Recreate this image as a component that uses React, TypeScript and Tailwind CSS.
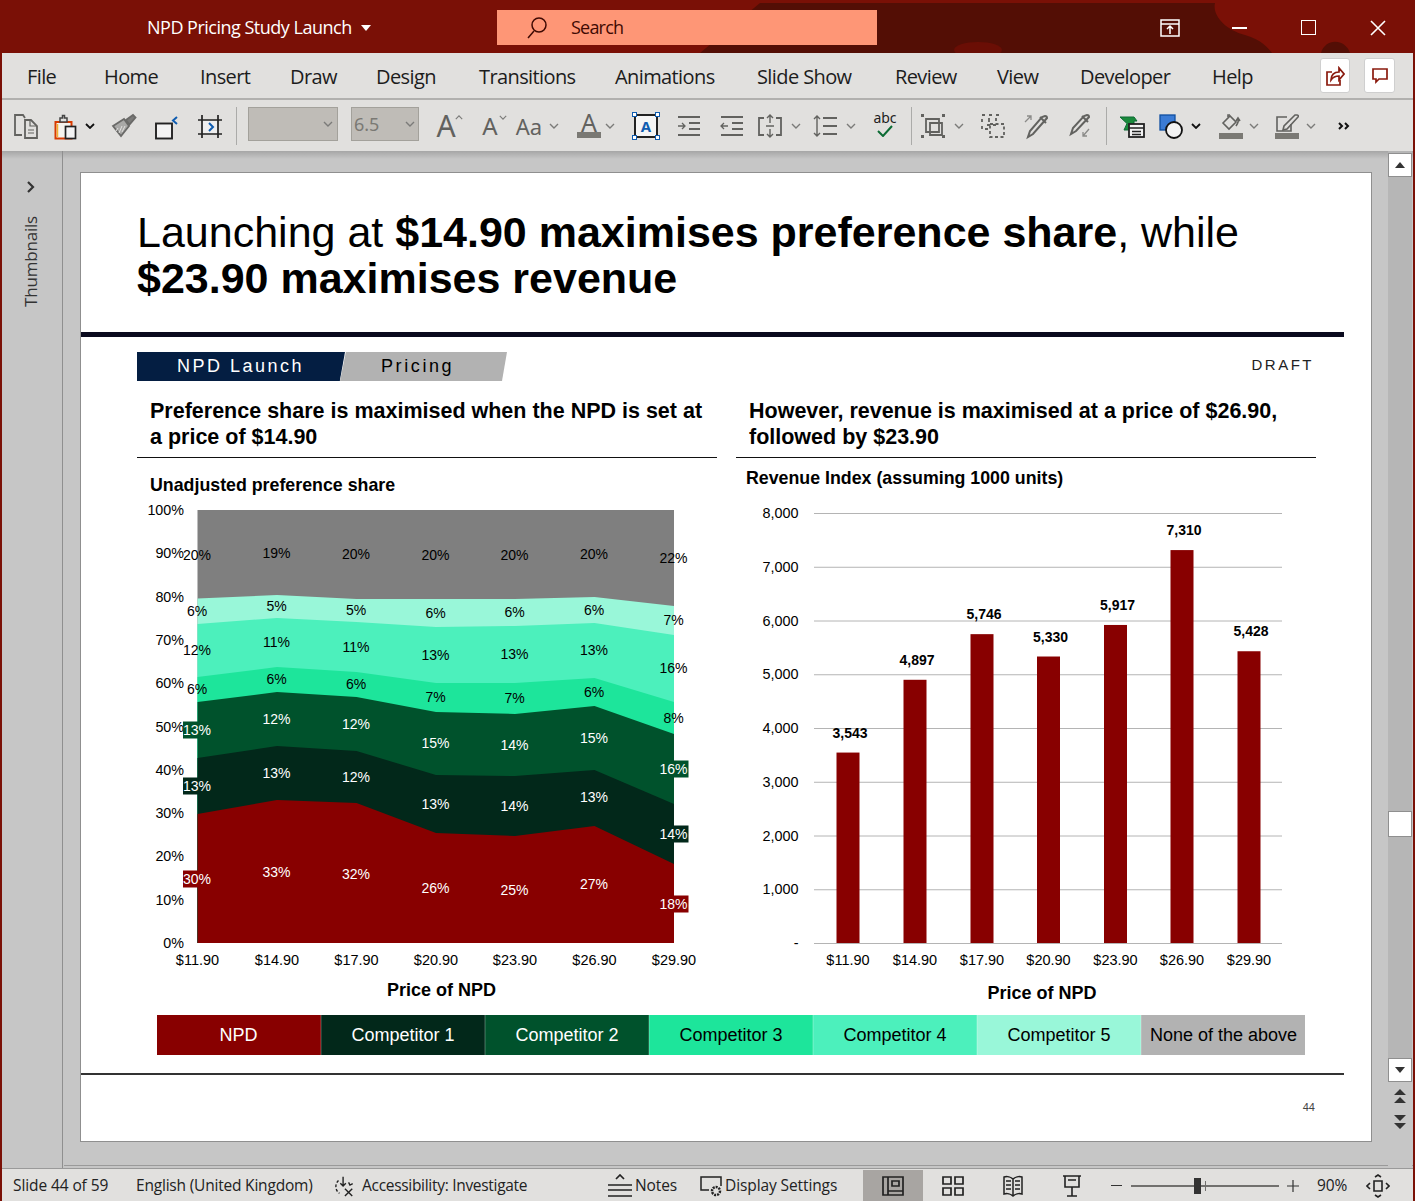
import type { ReactNode } from 'react';

const tabs = [
  ['File', 'w-[77px]'],
  ['Home', 'w-[96px]'],
  ['Insert', 'w-[90px]'],
  ['Draw', 'w-[86px]'],
  ['Design', 'w-[103px]'],
  ['Transitions', 'w-[136px]'],
  ['Animations', 'w-[142px]'],
  ['Slide Show', 'w-[138px]'],
  ['Review', 'w-[102px]'],
  ['View', 'w-[83px]'],
  ['Developer', 'w-[132px]'],
  ['Help', 'w-[60px]'],
];

const legend = [
  ['NPD', 'bg-[#880000] text-white'],
  ['Competitor 1', 'bg-[#02281a] text-white'],
  ['Competitor 2', 'bg-[#00522c] text-white'],
  ['Competitor 3', 'bg-[#1de59b] text-black'],
  ['Competitor 4', 'bg-[#4cf0bc] text-black'],
  ['Competitor 5', 'bg-[#99f7d9] text-black'],
  ['None of the above', 'bg-[#b2b2b2] text-black'],
];

const xs = [197.5, 277, 356.5, 436, 515, 594.5, 674];
const prices = ['$11.90', '$14.90', '$17.90', '$20.90', '$23.90', '$26.90', '$29.90'];
const bands = [
  { fill: '#7f7f7f', top: [510, 510, 510, 510, 510, 510, 510] },
  { fill: '#99f7d9', top: [598.5, 595, 599, 599, 599, 597, 606] },
  { fill: '#4cf0bc', top: [624, 618, 622, 627, 626, 623, 635] },
  { fill: '#1de59b', top: [677, 667, 672, 683, 683, 678, 702] },
  { fill: '#00522c', top: [702, 692, 697, 712, 714, 706, 734] },
  { fill: '#02281a', top: [758, 746, 751, 775, 776, 770, 804] },
  { fill: '#880000', top: [814, 800, 803, 833, 836, 826, 864] },
];

// value, y centre per column, top band to bottom band
const labels: [string, number][][] = [
  [['20%', 555], ['6%', 611], ['12%', 650], ['6%', 689], ['13%', 730], ['13%', 786], ['30%', 879]],
  [['19%', 553], ['5%', 606], ['11%', 642], ['6%', 679], ['12%', 719], ['13%', 773], ['33%', 872]],
  [['20%', 554], ['5%', 610], ['11%', 647], ['6%', 684], ['12%', 724], ['12%', 777], ['32%', 874]],
  [['20%', 555], ['6%', 613], ['13%', 655], ['7%', 697], ['15%', 743], ['13%', 804], ['26%', 888]],
  [['20%', 555], ['6%', 612], ['13%', 654], ['7%', 698], ['14%', 745], ['14%', 806], ['25%', 890]],
  [['20%', 554], ['6%', 610], ['13%', 650], ['6%', 692], ['15%', 738], ['13%', 797], ['27%', 884]],
  [['22%', 558], ['7%', 620], ['16%', 668], ['8%', 718], ['16%', 769], ['14%', 834], ['18%', 904]],
];

const AreaChart = () => (
  <svg viewBox="137 500 580 505" className="block h-[505px] w-[580px]">
    {bands.map((b) => (
      <polygon
        key={b.fill}
        fill={b.fill}
        points={`${b.top.map((y, i) => `${xs[i]},${y}`).join(' ')} 674,943 197.5,943`}
      />
    ))}
    {['100%', '90%', '80%', '70%', '60%', '50%', '40%', '30%', '20%', '10%', '0%'].map((t, i) => (
      <text key={t} x="184" y={510 + i * 43.3 + 5} textAnchor="end" fontSize="14.3" fill="#000">{t}</text>
    ))}
    {labels.map((col, c) =>
      col.map(([t, y], r) => {
        const edge = (c === 0 || c === 6) && r >= 4;
        return (
          <g key={`${c}-${r}`}>
            {edge && <rect x={xs[c] - 14.5} y={y - 8.5} width="29" height="17" fill={bands[r].fill} />}
            <text x={xs[c] - 0.5} y={y + 5} textAnchor="middle" fontSize="14" fill={r >= 4 ? '#fff' : '#000'}>{t}</text>
          </g>
        );
      }),
    )}
    {prices.map((p, i) => (
      <text key={p} x={xs[i]} y="965" textAnchor="middle" fontSize="14.5" fill="#000">{p}</text>
    ))}
    <text x="441.5" y="996" textAnchor="middle" fontSize="18" fontWeight="700" fill="#000">Price of NPD</text>
  </svg>
);

const bars = [
  [848, 3543, '3,543', 850],
  [915, 4897, '4,897', 917],
  [982, 5746, '5,746', 984],
  [1048.5, 5330, '5,330', 1050.5],
  [1115.5, 5917, '5,917', 1117.5],
  [1182, 7310, '7,310', 1184],
  [1249, 5428, '5,428', 1251],
] as const;

const BarChart = () => (
  <svg viewBox="736 500 580 505" className="block h-[505px] w-[580px]">
    {['8,000', '7,000', '6,000', '5,000', '4,000', '3,000', '2,000', '1,000', '-'].map((t, i) => {
      const y = 513.5 + i * 53.75;
      return (
        <g key={t}>
          <line x1="814" x2="1282" y1={y} y2={y} stroke="#b4b4b4" strokeWidth="1" />
          <text x="798.5" y={y + 4.5} textAnchor="end" fontSize="14.4" fill="#000">{t}</text>
        </g>
      );
    })}
    {bars.map(([x, v, t, lx]) => (
      <g key={t}>
        <rect x={x - 11.5} y={943 - (v * 53.75) / 1000} width="23" height={(v * 53.75) / 1000} fill="#880000" />
        <text x={lx} y={943 - (v * 53.75) / 1000 - 15} textAnchor="middle" fontSize="14" fontWeight="700" fill="#000">{t}</text>
      </g>
    ))}
    {prices.map((p, i) => (
      <text key={p} x={bars[i][0]} y="965" textAnchor="middle" fontSize="14.5" fill="#000">{p}</text>
    ))}
    <text x="1042" y="999" textAnchor="middle" fontSize="18" fontWeight="700" fill="#000">Price of NPD</text>
  </svg>
);

type IconProps = { children: ReactNode; className?: string; color?: string; width?: number };

const Ic = ({ children, className = '', color = '#62625f', width = 1.8 }: IconProps) => (
  <svg viewBox="0 0 24 24" fill="none" stroke={color} strokeWidth={width} className={`mt-[1px] h-6 w-6 shrink-0 overflow-visible ${className}`}>
    {children}
  </svg>
);

const Chev = ({ className = '', dark = false }: { className?: string; dark?: boolean }) => (
  <svg viewBox="0 0 10 6" fill="none" stroke={dark ? '#111' : '#7b7b79'} strokeWidth={dark ? 1.8 : 1.4} className={`h-[6px] w-[10px] shrink-0 ${className}`}>
    <path d="M1 1l4 4 4-4" />
  </svg>
);

const Sep = ({ className = '' }: { className?: string }) => <div className={`h-[38px] w-px shrink-0 bg-[#ababa9] ${className}`} />;

const BigA = ({ className = '', size, caret }: { className?: string; size: string; caret: 'up' | 'down' }) => (
  <div className={`relative mt-[1px] flex h-6 w-6 shrink-0 items-center justify-center ${className}`}>
    <span className={`font-['Noto_Sans',sans-serif] leading-none text-[#62625f] ${size}`}>A</span>
    <svg viewBox="0 0 10 6" fill="none" stroke="#7b7b79" strokeWidth="1.4" className="absolute right-[-5px] top-[1px] h-[5px] w-[8px]">
      <path d={caret === 'up' ? 'M1 5l4-4 4 4' : 'M1 1l4 4 4-4'} />
    </svg>
  </div>
);

const SwatchA = ({ className = '' }: { className?: string }) => (
  <div className={`mt-[1px] flex h-6 w-6 shrink-0 flex-col items-center ${className}`}>
    <span className="font-['Noto_Sans',sans-serif] text-[25px] leading-[17px] text-[#62625f]">A</span>
    <span className="mt-[1px] h-[6px] w-6 bg-[#7a7974]" />
  </div>
);

const Toolbar = () => (
  <div className="flex h-[51px] shrink-0 items-center bg-[#e1e0de]">
    <Ic className="ml-[11px]">
      <path d="M9 21H2V1h8l2 3" />
      <path d="M12 6h6l6 6v12H12z" />
      <path d="M17 6v6h7M15 16h6M15 19h6" strokeWidth="1.2" />
    </Ic>
    <Ic className="ml-[16px]" color="#222">
      <rect x="2.5" y="8" width="16" height="16.5" stroke="#d83b01" strokeWidth="2" fill="#f6f4ee" />
      <path d="M4.5 10v13" stroke="#f0b030" strokeWidth="1.5" />
      <path d="M7 8V4h2.5V1.5h2V4H14v4z" stroke="#444" strokeWidth="1.5" fill="#e1e0de" />
      <rect x="12.5" y="12.5" width="10" height="12" fill="#f3f3f3" strokeWidth="1.7" />
    </Ic>
    <Chev dark className="ml-[8px]" />
    <Ic className="ml-[17px]" color="#6a6a68">
      <path d="M1 12l11-7 5 7-8 10z" fill="#a9a9a7" />
      <path d="M14 6l7-5 2.500 2.500-6 7z" fill="#7b7b79" />
      <path d="M6 14l-2 3M10 12l-3 7M13 12l-3 6" stroke="#e1e0de" strokeWidth="1" />
    </Ic>
    <Ic className="ml-[17px]" color="#222">
      <rect x="3" y="9.5" width="16" height="15" fill="#f3f3f3" strokeWidth="1.9" />
      <path d="M24 3l-4 3.5 4 3.5" stroke="#0f5cb0" strokeWidth="2" />
    </Ic>
    <Ic className="ml-[21px]" color="#222">
      <path d="M0 6h24M0 20h24M4 1v23M20 1v23" strokeWidth="1.7" />
      <rect x="5" y="7" width="14" height="12" fill="#efefef" stroke="none" />
      <path d="M11 9l4 4-4 4" stroke="#0f5cb0" strokeWidth="2" />
    </Ic>
    <Sep className="ml-[14px]" />
    <div className="mb-[3px] ml-[11px] flex h-[34px] w-[90px] shrink-0 items-center justify-end border border-[#a3a19b] bg-[#bfbcb7] pr-[4px]">
      <Chev />
    </div>
    <div className="mb-[3px] ml-[13px] flex h-[34px] w-[68px] shrink-0 items-center justify-between border border-[#a3a19b] bg-[#bfbcb7] pl-[2px] pr-[3px] font-['Noto_Sans',sans-serif] text-[18px] text-[#7a7974]">
      <span>6.5</span>
      <Chev />
    </div>
    <BigA className="ml-[15px]" size="text-[30px]" caret="up" />
    <BigA className="ml-[20px]" size="text-[24px]" caret="down" />
    <div className="ml-[15px] mt-[1px] flex h-6 w-6 shrink-0 items-center justify-center font-['Noto_Sans',sans-serif] text-[22px] leading-none text-[#62625f]">Aa</div>
    <Chev className="ml-[8px]" />
    <SwatchA className="ml-[18px]" />
    <Chev className="ml-[4px]" />
    <div className="relative ml-[19px] mt-[1px] flex h-6 w-6 shrink-0 items-center justify-center border-2 border-[#222] bg-[#f5f5f5] font-['Noto_Sans',sans-serif] text-[15px] font-bold leading-none text-[#0f5cb0]">
      A
      <span className="absolute left-[-4px] top-[-4px] h-[5px] w-[5px] border border-[#0f5cb0] bg-white" />
      <span className="absolute right-[-4px] top-[-4px] h-[5px] w-[5px] border border-[#0f5cb0] bg-white" />
      <span className="absolute bottom-[-4px] left-[-4px] h-[5px] w-[5px] border border-[#0f5cb0] bg-white" />
      <span className="absolute bottom-[-4px] right-[-4px] h-[5px] w-[5px] border border-[#0f5cb0] bg-white" />
    </div>
    <Ic className="ml-[19px]">
      <path d="M1 3h22M12 9h11M12 15h11M1 21h22" />
      <path d="M1 12h7M5 9l3 3-3 3" strokeWidth="1.3" />
    </Ic>
    <Ic className="ml-[19px]">
      <path d="M1 3h22M12 9h11M12 15h11M1 21h22" />
      <path d="M8 12H1M4 9l-3 3 3 3" strokeWidth="1.3" />
    </Ic>
    <Ic className="ml-[14px]">
      <path d="M6 4H1v17h5M18 4h5v17h-5" />
      <path d="M12 1v8M12 15v8M9 4l3-3 3 3M9 20l3 3 3-3M8 12h8" strokeWidth="1.4" />
    </Ic>
    <Chev className="ml-[9px]" />
    <Ic className="ml-[12px]">
      <path d="M10 4h14M10 12h14M10 20h14" strokeWidth="2" />
      <path d="M4 2v20M1 5l3-3 3 3M1 19l3 3 3-3" strokeWidth="1.4" />
    </Ic>
    <Chev className="ml-[9px]" />
    <div className="ml-[17px] mt-[1px] flex h-8 w-6 shrink-0 flex-col items-center">
      <span className="font-['Noto_Sans',sans-serif] text-[14px] leading-[15px] text-[#222]">abc</span>
      <svg viewBox="0 0 16 12" fill="none" stroke="#0c6b34" strokeWidth="2" className="h-[12px] w-[16px]">
        <path d="M1 6l5 5 9-10" />
      </svg>
    </div>
    <Sep className="ml-[14px]" />
    <Ic className="ml-[9px]">
      <path d="M5 5h13v13H5zM9 9h12v12H9z" />
      <path d="M0 0h3v3H0zM21 0h3v3h-3zM0 21h3v3H0zM21 21h3v3h-3z" fill="#62625f" strokeWidth="0" />
    </Ic>
    <Chev className="ml-[9px]" />
    <Ic className="ml-[17px]" width={1.8}>
      <path d="M1 1h3M8 1h3M15 1h3M1 5v3M1 12v3M4 15h3M15 4v3M15 11h-3M9 11H6M8 4v4" />
      <rect x="9" y="10" width="14" height="13" strokeDasharray="3 2.5" />
    </Ic>
    <Ic className="ml-[19px]" width={2}>
      <path d="M21 2c1 0 2 1 2 2l-14 16-5 3 2-6L18 3zM16 3l6 6" />
      <path d="M1 8l6-6M3 2h4v4" strokeWidth="1.3" stroke="#8a8a88" />
    </Ic>
    <Ic className="ml-[19px]" width={2}>
      <path d="M20 1c1 0 2 1 2 2L9 17l-5 3 2-6L17 2zM15 2l6 6" />
      <path d="M22 15l-6 7M16 18v4h4" strokeWidth="1.3" stroke="#8a8a88" />
    </Ic>
    <Sep className="ml-[15px]" />
    <Ic className="ml-[13px]" color="#222">
      <path d="M0 3h14l3 4-3 0v9H4l3-6.5L0 3z" fill="#1a8a3c" stroke="#0c6b34" strokeWidth="1" />
      <rect x="9" y="10" width="15" height="13" fill="#f3f3f3" strokeWidth="1.8" />
      <path d="M9 14h15M12 17.500h9M12 20.500h9" strokeWidth="1.3" />
    </Ic>
    <Ic className="ml-[14px]" color="#111">
      <rect x="2" y="1" width="15" height="15" fill="#3a7bd5" stroke="#0f4fa0" strokeWidth="1.3" />
      <circle cx="16" cy="16" r="8" fill="#f3f3f3" strokeWidth="1.8" />
    </Ic>
    <Chev dark className="ml-[9px]" />
    <div className="ml-[18px] mt-[1px] flex h-6 w-6 shrink-0 flex-col items-center">
      <svg viewBox="0 0 24 19" fill="none" stroke="#62625f" strokeWidth="1.6" className="h-[19px] w-6 shrink-0">
        <path d="M4 9l7-7 6 6-7 7z" />
        <path d="M9 3V1h2M17 12c2-3 3-5 2-7M21 7l-2-3-2 3" />
      </svg>
      <span className="h-[6px] w-6 shrink-0 bg-[#7a7974]" />
    </div>
    <Chev className="ml-[6px]" />
    <div className="ml-[16px] mt-[1px] flex h-6 w-6 shrink-0 flex-col items-center">
      <svg viewBox="0 0 24 19" fill="none" stroke="#62625f" strokeWidth="1.6" className="h-[19px] w-6 shrink-0">
        <path d="M12 3H2v14h14V10" />
        <path d="M22 1c1 0 2 1 1 2L12 15l-4 1 1-4L20 1z" />
      </svg>
      <span className="h-[6px] w-6 shrink-0 bg-[#7a7974]" />
    </div>
    <Chev className="ml-[7px]" />
    <svg viewBox="0 0 12 8" fill="none" stroke="#111" strokeWidth="2" className="ml-[22px] mt-[1px] h-2 w-3 shrink-0">
      <path d="M1 1l3 3-3 3M7 1l3 3-3 3" />
    </svg>
  </div>
);

const ScrollBtn = ({ down = false, className = '' }: { down?: boolean; className?: string }) => (
  <div className={`flex h-6 w-6 shrink-0 items-center justify-center border border-[#8f8f8f] bg-white ${className}`}>
    <svg viewBox="0 0 10 6" className="h-[6px] w-[10px]" fill="#333">
      <path d={down ? 'M0 0h10L5 6z' : 'M0 6h10L5 0z'} />
    </svg>
  </div>
);

const Slide = () => (
  <div className="h-[970px] w-[1292px] shrink-0 border border-[#8f8f8f] bg-white font-['Liberation_Sans',Arial,sans-serif] text-black">
    <h1 className="pl-[56px] pt-[36px] text-[43px] font-normal leading-[46px]">
      Launching at <b>$14.90 maximises preference share</b>, while
      <br />
      <b>$23.90 maximises revenue</b>
    </h1>
    <div className="mt-[31px] h-[5px] w-[1263px] bg-[#0a0a1e]" />
    <div className="ml-[56px] mt-[15px] flex h-[29px] w-[1177px] items-center justify-between">
      <div className="flex h-[29px]">
        <div className="flex h-full w-[208px] items-center pb-[1px] pl-[40px] text-[18px] tracking-[2.5px] text-white [background:#041e42] [clip-path:polygon(0_0,100%_0,97.500%_100%,0_100%)]">
          NPD Launch
        </div>
        <div className="ml-[-5px] flex h-full w-[167px] items-center pb-[1px] pl-[41px] text-[18px] tracking-[2.6px] [background:#b2b2b2] [clip-path:polygon(3.500%_0,100%_0,97%_100%,0_100%)]">
          Pricing
        </div>
      </div>
      <span className="mb-[2px] text-[15px] tracking-[2.5px] text-[#222]">DRAFT</span>
    </div>
    <div className="ml-[56px] mt-[17px] flex gap-[19px]">
      <div className="w-[580px]">
        <div className="h-[60px] border-b border-[#111] pl-[13px] text-[21.500px] font-bold leading-[26px]">
          Preference share is maximised when the NPD is set at
          <br />a price of $14.90
        </div>
        <div className="h-[42px] pl-[13px] pt-[17px] text-[17.800px] font-bold leading-[20px]">Unadjusted preference share</div>
        <AreaChart />
      </div>
      <div className="w-[580px]">
        <div className="h-[60px] border-b border-[#111] pl-[13px] text-[21.500px] font-bold leading-[26px]">
          However, revenue is maximised at a price of $26.90,
          <br />
          followed by $23.90
        </div>
        <div className="h-[42px] pl-[10px] pt-[10px] text-[17.800px] font-bold leading-[20px]">Revenue Index (assuming 1000 units)</div>
        <BarChart />
      </div>
    </div>
    <div className="ml-[76px] mt-[10px] grid h-[40px] w-[1148px] grid-cols-7">
      {legend.map(([t, c]) => (
        <div key={t} className={`flex items-center justify-center border-x border-white/15 text-[18px] first:border-l-0 last:border-r-0 ${c}`}>{t}</div>
      ))}
    </div>
    <div className="mt-[18px] h-[2px] w-[1263px] bg-[#333]" />
    <div className="mt-[25px] w-[1234px] text-right text-[11px] leading-[14px] text-[#444]">44</div>
  </div>
);

export default function App() {
  return (
    <div className="flex h-[1201px] w-[1415px] flex-col overflow-hidden bg-[#7a1006] font-['Open_Sans','Noto_Sans',sans-serif]">
      {/* title bar */}
      <div className="relative flex h-[53px] shrink-0 items-center pt-[2px]">
        <svg viewBox="0 0 1415 53" className="absolute inset-0 h-[53px] w-[1415px]">
          <path d="M700 53L760 3H1215C1212 15 1225 30 1245 35C1262 40 1268 48 1272 53Z" fill="#530e05" />
          <ellipse cx="978" cy="50" rx="24" ry="8" fill="#6a0e05" />
          <path d="M1321 53C1325 38 1345 38 1350 53Z" fill="#530e05" />
        </svg>
        <div className="relative flex w-[497px] items-center gap-[9px] pl-[147px] text-[18px] tracking-[-0.5px] text-white">
          NPD Pricing Study Launch
          <svg viewBox="0 0 10 6" fill="#fff" className="h-[6px] w-[10px]"><path d="M0 0h10L5 6z" /></svg>
        </div>
        <div className="relative flex h-[35px] w-[380px] items-center bg-[#fe9676] pl-[28px] text-[18px] tracking-[-0.8px] text-[#3f0a03]">
          <svg viewBox="0 0 24 24" fill="none" stroke="#3f0a03" strokeWidth="1.5" className="h-6 w-6">
            <circle cx="14" cy="9" r="7" />
            <path d="M9 15l-6 7" />
          </svg>
          <span className="ml-[22px]">Search</span>
        </div>
        <div className="relative ml-[258px] flex">
          <div className="flex h-[51px] w-[70px] items-center justify-center">
            <svg viewBox="0 0 20 18" fill="none" stroke="#fff" strokeWidth="1.500" className="h-[18px] w-5">
              <path d="M1 1h18v16H1zM1 5h18" />
              <path d="M10 15V8M7 10l3-3 3 3" />
            </svg>
          </div>
          <div className="flex h-[51px] w-[69px] items-center justify-center">
            <div className="h-[2px] w-[15px] bg-white" />
          </div>
          <div className="flex h-[51px] w-[69px] items-center justify-center">
            <div className="h-[15px] w-[15px] border-[1.500px] border-white" />
          </div>
          <div className="flex h-[51px] w-[69px] items-center justify-center">
            <svg viewBox="0 0 16 16" stroke="#fff" strokeWidth="1.600" className="h-4 w-4"><path d="M1 1l14 14M15 1L1 15" /></svg>
          </div>
        </div>
      </div>

      <div className="mx-[2px] flex min-h-0 flex-1 flex-col">
        {/* tabs */}
        <div className="flex h-[47px] shrink-0 items-center border-b-[2px] border-[#b1b0ae] bg-[#e1e0de] pl-[25px] pt-[3px] text-[20px] text-[#1c1c1c]">
          {tabs.map(([t, w]) => (
            <div key={t} className={`${w} shrink-0 tracking-[-0.6px]`}>{t}</div>
          ))}
          <div className="mb-[3px] ml-[48px] flex h-[35px] w-[30px] shrink-0 items-center justify-center rounded-[3px] border border-[#cfcfcf] bg-white">
            <svg viewBox="0 0 20 20" fill="none" stroke="#8a1a0e" strokeWidth="1.700" className="h-5 w-5">
              <path d="M7 6H2v13h13v-5" />
              <path d="M6 14c0-5 3-8 8-8V2l5 6-5 6V10c-4 0-6 1-8 4z" />
            </svg>
          </div>
          <div className="mb-[3px] ml-[14px] flex h-[35px] w-[31px] shrink-0 items-center justify-center rounded-[3px] border border-[#cfcfcf] bg-white">
            <svg viewBox="0 0 20 20" fill="none" stroke="#8a1a0e" strokeWidth="1.700" className="h-5 w-5">
              <path d="M3 3h14v10H9l-3 3v-3H3z" />
            </svg>
          </div>
        </div>
        <Toolbar />

        {/* workspace */}
        <div className="relative flex min-h-0 flex-1 bg-[#c6c6c6]">
          <div className="absolute inset-x-0 top-0 h-[8px] bg-gradient-to-b from-[#a6a6a6] to-[#c6c6c6]" />
          <div className="absolute bottom-[2px] left-[62px] right-0 h-px bg-[#9a9a9a]" />
          <div className="relative flex w-[61px] shrink-0 flex-col items-center border-r border-[#8f8f8f] pr-[2px] pt-[30px] text-[#333]">
            <svg viewBox="0 0 8 12" fill="none" stroke="#333" strokeWidth="2.200" className="h-3 w-2"><path d="M1 1l5 5-5 5" /></svg>
            <span className="mt-[23px] text-[17px] tracking-[-0.2px] [transform:rotate(180deg)] [writing-mode:vertical-rl]">Thumbnails</span>
          </div>
          <div className="relative ml-[17px] mt-[21px]">
            <Slide />
          </div>
          <div className="relative ml-[16px] flex w-[24px] shrink-0 flex-col items-center bg-[#b6b6b6]">
            <ScrollBtn className="mt-[2px]" />
            <div className="mt-[634px] h-[26px] w-6 border border-[#8f8f8f] bg-white" />
            <ScrollBtn down className="mt-[221px]" />
            <div className="flex w-6 flex-1 flex-col items-center gap-[12px] bg-[#c6c6c6] pt-[7px]">
              <svg viewBox="0 0 12 14" fill="#333" className="h-[14px] w-3"><path d="M0 6h12L6 0zM0 14h12L6 8z" /></svg>
              <svg viewBox="0 0 12 14" fill="#333" className="h-[14px] w-3"><path d="M0 0h12L6 6zM0 8h12l-6 6z" /></svg>
            </div>
          </div>
        </div>

        {/* status bar */}
        <div className="flex h-[33px] shrink-0 items-center border-t border-[#9a9a9a] bg-[#e1e0de] pt-[1px] text-[15.500px] tracking-[-0.1px] text-[#222]">
          <span className="ml-[11px] w-[123px] shrink-0">Slide 44 of 59</span>
          <span className="w-[197px] shrink-0 tracking-[-0.2px]">English (United Kingdom)</span>
          <svg viewBox="0 0 24 24" fill="none" stroke="#222" strokeWidth="1.500" className="h-[22px] w-[22px] shrink-0">
            <path d="M6 6a9 9 0 0 0 1 14" strokeDasharray="3 2" />
            <path d="M11 2v10M8 9l3 3 3-3M13 15l8 8M21 15l-8 8M17 8l1.500 3 3-1.500" />
          </svg>
          <span className="ml-[7px] w-[245px] shrink-0 tracking-[-0.3px]">Accessibility: Investigate</span>
          <svg viewBox="0 0 26 24" fill="none" stroke="#222" strokeWidth="1.700" className="h-6 w-[26px] shrink-0">
            <path d="M9 5l4-4 4 4M1 11h24M1 16h24M1 22h24" />
          </svg>
          <span className="ml-[2px] w-[48px] shrink-0">Notes</span>
          <svg viewBox="0 0 24 22" fill="none" stroke="#222" strokeWidth="1.500" className="ml-[16px] h-[22px] w-6 shrink-0">
            <path d="M10 15H2V2h20v9" />
            <circle cx="17" cy="16" r="4" strokeWidth="2.500" strokeDasharray="2 1" />
          </svg>
          <span className="ml-[2px] w-[138px] shrink-0">Display Settings</span>
          <div className="flex h-full w-[60px] shrink-0 items-center justify-center bg-[#a8a5a2]">
            <svg viewBox="0 0 22 20" fill="none" stroke="#222" strokeWidth="1.700" className="h-5 w-[22px]">
              <path d="M1 1h20v18H1zM6 1v18M6 15h15M10 5h7v5h-7z" />
            </svg>
          </div>
          <svg viewBox="0 0 22 20" fill="none" stroke="#222" strokeWidth="1.700" className="ml-[19px] h-5 w-[22px] shrink-0">
            <path d="M1 1h8v7H1zM13 1h8v7h-8zM1 12h8v7H1zM13 12h8v7h-8z" />
          </svg>
          <svg viewBox="0 0 22 22" fill="none" stroke="#222" strokeWidth="1.500" className="ml-[38px] h-[22px] w-[22px] shrink-0">
            <path d="M11 4C9 2 5 1 2 2v17c3-1 7 0 9 2 2-2 6-3 9-2V2c-3-1-7 0-9 2zM11 4v17M4 6h5M4 10h5M4 14h5M13 6h5M13 10h5M13 14h5" />
          </svg>
          <svg viewBox="0 0 20 24" fill="none" stroke="#222" strokeWidth="1.600" className="ml-[38px] h-6 w-5 shrink-0">
            <path d="M1 2h18M3 2v11h14V2M10 13v9M5 22h10M6 6h8" />
          </svg>
          <div className="ml-[29px] h-[1.500px] w-[11px] shrink-0 bg-[#333]" />
          <div className="relative ml-[9px] h-[2px] w-[148px] shrink-0 bg-[#71706e]">
            <div className="absolute left-[63px] top-[-7px] h-4 w-[7px] bg-[#333]" />
            <div className="absolute left-[74px] top-[-4px] h-[10px] w-px bg-[#71706e]" />
          </div>
          <svg viewBox="0 0 12 12" stroke="#333" strokeWidth="1.200" className="ml-[8px] h-3 w-3 shrink-0"><path d="M6 0v12M0 6h12" /></svg>
          <span className="ml-[18px] w-[49px] shrink-0">90%</span>
          <svg viewBox="0 0 24 24" fill="none" stroke="#222" strokeWidth="1.600" className="h-6 w-6 shrink-0">
            <path d="M8 7h8v10H8zM9 3l3-2 3 2M9 21l3 2 3-2M4 9l-3 3 3 3M20 9l3 3-3 3" />
          </svg>
        </div>
      </div>
    </div>
  );
}
